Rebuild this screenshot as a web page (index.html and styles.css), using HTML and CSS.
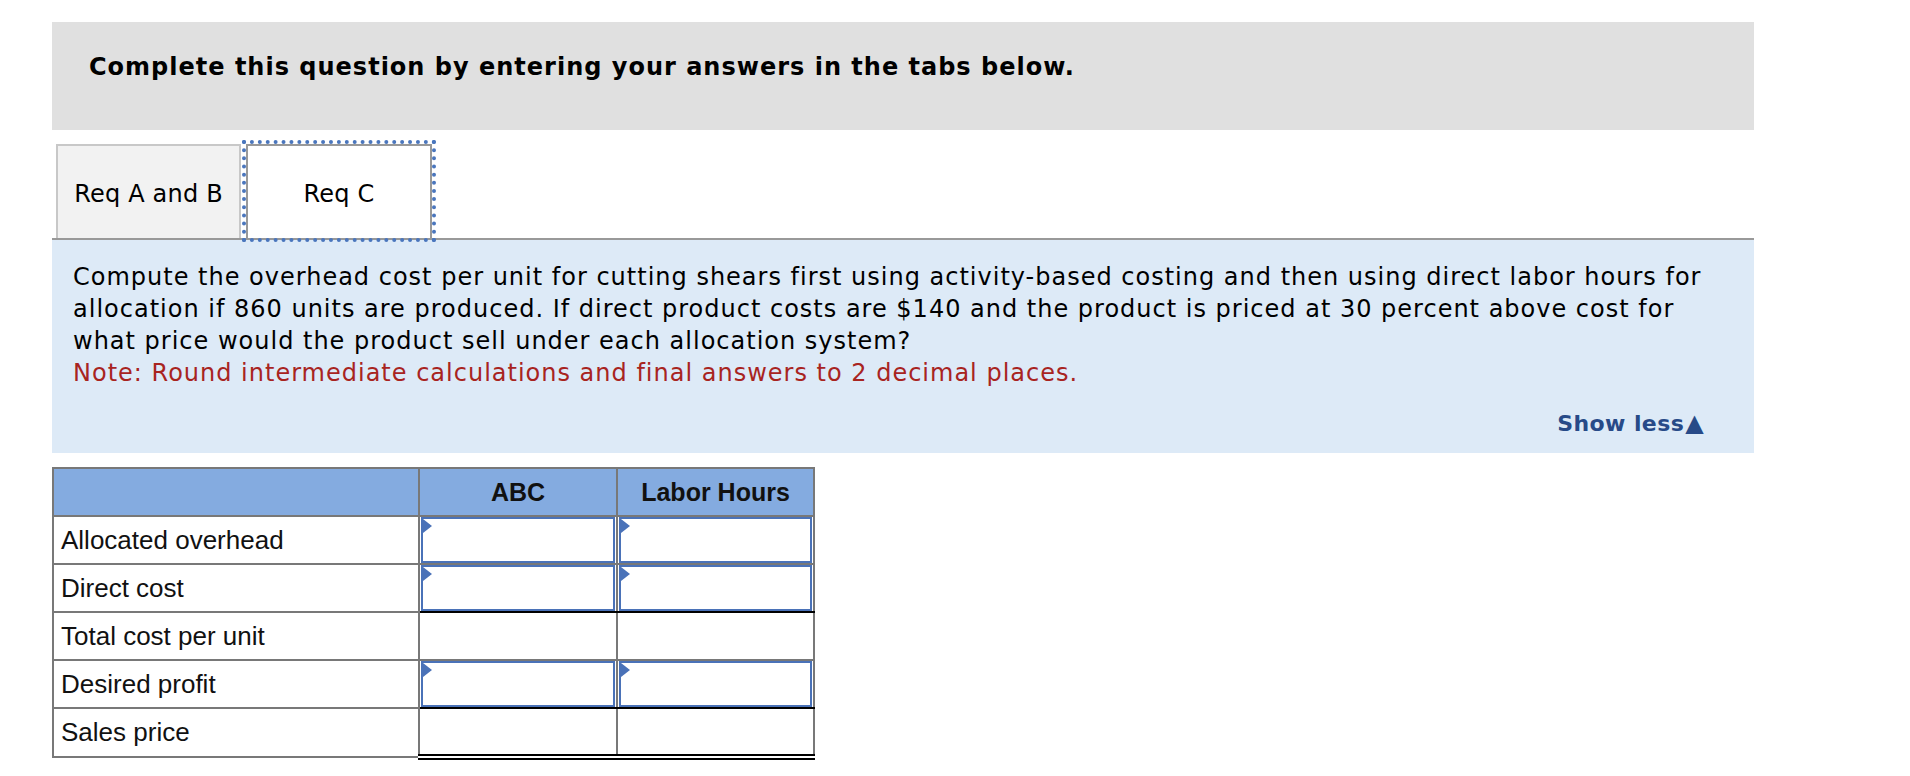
FILE: index.html
```html
<!DOCTYPE html>
<html lang="en">
<head>
<meta charset="utf-8">
<title>Req C</title>
<link rel="stylesheet" href="styles.css">
</head>
<body>
<div class="page">
  <div class="instructions">
    <p class="instructions-text">Complete this question by entering your answers in the tabs below.</p>
  </div>

  <div class="tabs">
    <div class="tab">Req A and B</div>
    <div class="tab tab-active">Req C</div>
  </div>

  <div class="panel">
    <p class="question">Compute the overhead cost per unit for cutting shears first using activity-based costing and then using direct labor hours for allocation if 860 units are produced. If direct product costs are $140 and the product is priced at 30 percent above cost for what price would the product sell under each allocation system?<br><span class="note">Note: Round intermediate calculations and final answers to 2 decimal places.</span></p>
    <div class="show-less">Show less<span class="arrow">▲</span></div>
  </div>

  <table class="grid">
    <colgroup>
      <col class="col-label">
      <col class="col-value">
      <col class="col-value2">
    </colgroup>
    <thead>
      <tr>
        <th></th>
        <th>ABC</th>
        <th>Labor Hours</th>
      </tr>
    </thead>
    <tbody>
      <tr>
        <td class="label">Allocated overhead</td>
        <td class="cell"><div class="input"></div></td>
        <td class="cell"><div class="input"></div></td>
      </tr>
      <tr class="subtotal">
        <td class="label">Direct cost</td>
        <td class="cell"><div class="input"></div></td>
        <td class="cell"><div class="input"></div></td>
      </tr>
      <tr>
        <td class="label">Total cost per unit</td>
        <td class="cell"></td>
        <td class="cell"></td>
      </tr>
      <tr class="subtotal">
        <td class="label">Desired profit</td>
        <td class="cell"><div class="input"></div></td>
        <td class="cell"><div class="input"></div></td>
      </tr>
      <tr class="total">
        <td class="label">Sales price</td>
        <td class="cell"></td>
        <td class="cell"></td>
      </tr>
    </tbody>
  </table>
</div>
</body>
</html>
```

FILE: styles.css
```css
html, body {
  margin: 0;
  padding: 0;
  background: #ffffff;
}

.page {
  width: 1702px;
  padding: 22px 0 0 52px;
  font-family: "DejaVu Sans", Verdana, sans-serif;
  color: #000;
}

/* gray instructions bar */
.instructions {
  background: #e0e0e0;
  height: 108px;
  box-sizing: border-box;
  padding: 30px 0 0 37px;
}

.instructions-text {
  margin: 0;
  font-weight: bold;
  font-size: 24px;
  line-height: 30px;
  letter-spacing: 1px;
}

/* tabs */
.tabs {
  display: flex;
  align-items: flex-end;
  gap: 5px;
  margin-top: 14px;
  padding-left: 4px;
  border-bottom: 2px solid #999999;
}

.tab {
  box-sizing: border-box;
  width: 185px;
  height: 94px;
  display: flex;
  align-items: center;
  justify-content: center;
  font-size: 24px;
  letter-spacing: 0.2px;
  background: #f2f2f2;
  border: 2px solid #c8c8c8;
  border-bottom: 0;
  padding-top: 4px;
}

.tab-active {
  width: 186px;
  background: #ffffff;
  border-color: #999999;
  outline: 4px dotted #4a76bd;
}

/* question panel */
.panel {
  background: #ddeaf7;
  box-sizing: border-box;
  height: 213px;
  padding: 21px 21px 0 21px;
}

.question {
  margin: 0;
  font-size: 24px;
  line-height: 32px;
  letter-spacing: 1px;
}

.note {
  color: #a8241f;
}

.show-less {
  margin-top: 18px;
  padding-right: 29px;
  text-align: right;
  font-size: 22px;
  line-height: 32px;
  font-weight: bold;
  letter-spacing: 0.4px;
  color: #274a88;
}

.arrow {
  font-size: 24px;
  margin-left: 1px;
}

/* answer grid */
.grid {
  margin-top: 14px;
  border-collapse: collapse;
  table-layout: fixed;
  width: 761px;
  font-family: "Liberation Sans", Arial, sans-serif;
  font-size: 26px;
  color: #111;
}

.col-label { width: 366px; }
.col-value { width: 198px; }
.col-value2 { width: 197px; }

.grid th,
.grid td {
  border: 2px solid #787878;
  height: 46px;
  padding: 0;
}

.grid th {
  background: #84abe0;
  font-weight: bold;
  text-align: center;
  font-size: 25px;
}

.grid td.label {
  padding-left: 7px;
}

.grid td.cell {
  position: relative;
}

.subtotal td.cell {
  border-bottom: 2px solid #000000;
}

.total td.cell {
  border-bottom: 6px double #000000;
  height: 45px;
}

.input {
  position: relative;
  box-sizing: border-box;
  height: 46px;
  margin: 0 1px;
  border: 2px solid #4a72b8;
  background: #ffffff;
}

.input::before {
  content: "";
  position: absolute;
  left: 0;
  top: 0;
  width: 0;
  height: 0;
  border-top: 7px solid transparent;
  border-bottom: 7px solid transparent;
  border-left: 9px solid #4a72b8;
}
```
